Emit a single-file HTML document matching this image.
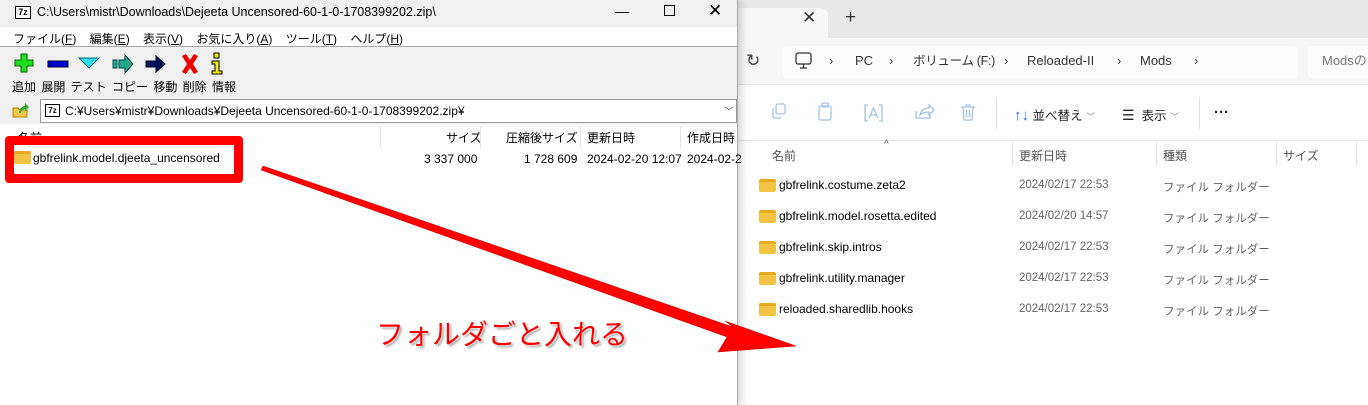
<!DOCTYPE html>
<html><head><meta charset="utf-8"><style>
*{margin:0;padding:0;box-sizing:border-box}
body{width:1368px;height:405px;overflow:hidden;background:#fff;font-family:"Liberation Sans","Noto Sans CJK JP",sans-serif;position:relative;font-size:12px;color:#000}
.a{position:absolute;white-space:nowrap}
.fold{position:absolute;width:17px;height:13px;background:#f3c444;border-radius:2px;border-top:3px solid #e9a920}
.bc{position:absolute;top:52px;height:18px;line-height:18px;font-size:13px;color:#333;white-space:nowrap}
</style></head><body>
<!-- Explorer (right) -->
<div class="a" style="left:738px;top:0;width:630px;height:38px;background:#e8e8e8"></div>
<div class="a" style="left:738px;top:8px;width:90px;height:30px;background:#f7f7f7;border-radius:0 8px 0 0"></div>
<div class="a" style="left:802px;top:8px;font-size:17px;color:#333">✕</div>
<div class="a" style="left:845px;top:7px;font-size:19px;color:#333">+</div>
<div class="a" style="left:738px;top:38px;width:630px;height:47px;background:#f7f7f7;border-bottom:1px solid #e5e5e5"></div>
<div class="a" style="left:746px;top:51px;font-size:17px;color:#444">↻</div>
<div class="a" style="left:783px;top:46px;width:515px;height:32px;background:#fdfdfd;border-radius:4px"></div>
<div class="a" style="left:1308px;top:46px;width:70px;height:32px;background:#fdfdfd;border-radius:4px"></div>
<svg class="a" style="left:794px;top:52px" width="20" height="18"><rect x="2" y="1" width="15" height="11" rx="2" fill="none" stroke="#333" stroke-width="1.3"/><path d="M6 16h7M9.5 12v4" stroke="#333" stroke-width="1.3"/></svg>
<div class="bc" style="left:829px">›</div>
<div class="bc" style="left:855px">PC</div>
<div class="bc" style="left:889px">›</div>
<div class="bc" style="left:913px;font-size:12.5px;letter-spacing:-0.3px">ボリューム (F:)</div>
<div class="bc" style="left:1004px">›</div>
<div class="bc" style="left:1027px">Reloaded-II</div>
<div class="bc" style="left:1117px">›</div>
<div class="bc" style="left:1140px">Mods</div>
<div class="bc" style="left:1194px">›</div>
<div class="bc" style="left:1322px;color:#777">Modsの</div>
<svg class="a" style="left:765px;top:100px" width="225" height="26" fill="none" stroke="#a7c4e0" stroke-width="1.3">
<rect x="11" y="4" width="9" height="10" rx="2"/><path d="M8 8v8a2 2 0 0 0 2 2h6"/>
<rect x="54" y="6" width="12" height="14" rx="2"/><rect x="57" y="3" width="6" height="4" rx="1"/>
<path d="M103 5h-3v16h3M114 5h3v16h-3M104 18l4.5-10 4.5 10M105.5 15h6"/>
<path d="M151 11v7h14v-3M155 15c1-5 4-7 9-7V5l5 5-5 5v-3c-4 0-7 1-9 3z"/>
<path d="M196 7h14M201 7V5h4v2M198 7l1 13h8l1-13M201.5 10v7M204.5 10v7"/>
</svg>
<div class="a" style="left:996px;top:97px;width:1px;height:32px;background:#e0e0e0"></div>
<div class="a" style="left:1014px;top:105px;font-size:12.5px;color:#222"><span style="color:#2a6ad8;font-size:15px">↑↓</span> 並べ替え <span style="color:#888;font-size:9px">﹀</span></div>
<div class="a" style="left:1122px;top:105px;font-size:12.5px;color:#222"><span style="font-size:14px">☰</span>&nbsp; 表示 <span style="color:#888;font-size:9px">﹀</span></div>
<div class="a" style="left:1199px;top:97px;width:1px;height:32px;background:#e0e0e0"></div>
<div class="a" style="left:1214px;top:104px;font-size:15px;color:#222;font-weight:bold">···</div>
<div class="a" style="left:738px;top:140px;width:630px;height:1px;background:#e5e5e5"></div>
<div class="a" style="left:884px;top:139px;font-size:10px;color:#666">^</div>
<div class="a" style="left:772px;top:147px;color:#555">名前</div>
<div class="a" style="left:1012px;top:142px;width:1px;height:23px;background:#e5e5e5"></div>
<div class="a" style="left:1019px;top:147px;color:#555">更新日時</div>
<div class="a" style="left:1156px;top:142px;width:1px;height:23px;background:#e5e5e5"></div>
<div class="a" style="left:1163px;top:147px;color:#555">種類</div>
<div class="a" style="left:1276px;top:142px;width:1px;height:23px;background:#e5e5e5"></div>
<div class="a" style="left:1283px;top:147px;color:#555">サイズ</div>
<div class="a" style="left:1356px;top:142px;width:1px;height:23px;background:#e5e5e5"></div>
<div class="fold" style="left:759px;top:179px"></div><div class="a" style="left:779px;top:178px">gbfrelink.costume.zeta2</div><div class="a" style="left:1019px;top:179px;color:#666;font-size:11.5px">2024/02/17 22:53</div><div class="a" style="left:1163px;top:179px;color:#666;font-size:11.5px">ファイル フォルダー</div>
<div class="fold" style="left:759px;top:210px"></div><div class="a" style="left:779px;top:209px">gbfrelink.model.rosetta.edited</div><div class="a" style="left:1019px;top:210px;color:#666;font-size:11.5px">2024/02/20 14:57</div><div class="a" style="left:1163px;top:210px;color:#666;font-size:11.5px">ファイル フォルダー</div>
<div class="fold" style="left:759px;top:241px"></div><div class="a" style="left:779px;top:240px">gbfrelink.skip.intros</div><div class="a" style="left:1019px;top:241px;color:#666;font-size:11.5px">2024/02/17 22:53</div><div class="a" style="left:1163px;top:241px;color:#666;font-size:11.5px">ファイル フォルダー</div>
<div class="fold" style="left:759px;top:272px"></div><div class="a" style="left:779px;top:271px">gbfrelink.utility.manager</div><div class="a" style="left:1019px;top:272px;color:#666;font-size:11.5px">2024/02/17 22:53</div><div class="a" style="left:1163px;top:272px;color:#666;font-size:11.5px">ファイル フォルダー</div>
<div class="fold" style="left:759px;top:303px"></div><div class="a" style="left:779px;top:302px">reloaded.sharedlib.hooks</div><div class="a" style="left:1019px;top:303px;color:#666;font-size:11.5px">2024/02/17 22:53</div><div class="a" style="left:1163px;top:303px;color:#666;font-size:11.5px">ファイル フォルダー</div>

<!-- 7-Zip window (left) -->
<div class="a" style="left:0;top:0;width:738px;height:405px;background:#fff;border-right:1px solid #aaa;box-shadow:3px 0 8px rgba(0,0,0,.18)"></div>
<div class="a" style="left:0;top:0;width:737px;height:27px;background:#f0f0f0"></div>
<div class="a" style="left:15px;top:6px;width:16px;height:13px;border:1px solid #000;font-size:9px;font-weight:bold;line-height:11px;text-align:center;background:#fff">7z</div>
<div class="a" style="left:37px;top:5px;font-size:12.5px">C:\Users\mistr\Downloads\Dejeeta Uncensored-60-1-0-1708399202.zip\</div>
<div class="a" style="left:615px;top:3px;font-size:14px">—</div>
<div class="a" style="left:664px;top:5px;width:11px;height:11px;border:1.3px solid #000"></div>
<div class="a" style="left:708px;top:1px;font-size:17px">✕</div>
<div class="a" style="left:13px;top:30px;font-size:12px;word-spacing:10px">ファイル(<u>F</u>) 編集(<u>E</u>) 表示(<u>V</u>) お気に入り(<u>A</u>) ツール(<u>T</u>) ヘルプ(<u>H</u>)</div>
<div class="a" style="left:0;top:46px;width:737px;height:52px;background:#f0f0f0;border-top:1px solid #aaa"></div>
<svg class="a" style="left:12px;top:52px" width="230" height="24">
<path d="M9 2h6v6h6v6h-6v6H9v-6H3V8h6z" fill="#2d2" stroke="#060" stroke-width="1"/>
<rect x="36" y="9" width="20" height="6" fill="#00c" stroke="#003"/>
<path d="M67 6h20l-10 10z" fill="#3de" stroke="#067"/>
<path d="M101 8h4v8h-4zM107 8h6v-5l8 9-8 9v-5h-6z" fill="#2a8" stroke="#044"/>
<path d="M134 9h10V4l9 8-9 8v-5h-10z" fill="#015" stroke="#003"/>
<path d="M170 4l4-2 4 6 4-6 4 2-5 8 5 8-4 2-4-6-4 6-4-2 5-8z" fill="#e00"/>
<path d="M202 1h5v5h-5zM200 9h7v10h3v3h-10v-3h3v-7h-3z" fill="#ee2" stroke="#000"/>
</svg>
<div class="a" style="left:12px;top:78px;font-size:12px;word-spacing:2px">追加 展開 テスト コピー 移動 削除 情報</div>
<div class="a" style="left:0;top:98px;width:737px;height:26px;background:#f0f0f0"></div>
<svg class="a" style="left:11px;top:101px" width="20" height="18"><path d="M2 16V7h5l2 2h7v7z" fill="#f2c94c" stroke="#a80"/><path d="M8 12c0-4 3-7 6-7V2l4 4-4 4V8c-2 0-4 2-4 4z" fill="#3a3"/></svg>
<div class="a" style="left:40px;top:99px;width:697px;height:24px;background:#fff;border:1px solid #999"></div>
<div class="a" style="left:45px;top:104px;width:15px;height:13px;border:1px solid #000;font-size:8px;font-weight:bold;line-height:11px;text-align:center">7z</div>
<div class="a" style="left:65px;top:104px;font-size:12px">C:¥Users¥mistr¥Downloads¥Dejeeta Uncensored-60-1-0-1708399202.zip¥</div>
<div class="a" style="left:724px;top:103px;font-size:10px;color:#555">﹀</div>
<div class="a" style="left:18px;top:129px;font-size:12px">名前</div>
<div class="a" style="left:380px;top:126px;width:1px;height:22px;background:#e5e5e5"></div>
<div class="a" style="left:446px;top:129px">サイズ</div>
<div class="a" style="left:480px;top:126px;width:1px;height:22px;background:#e5e5e5"></div>
<div class="a" style="left:506px;top:129px">圧縮後サイズ</div>
<div class="a" style="left:580px;top:126px;width:1px;height:22px;background:#e5e5e5"></div>
<div class="a" style="left:587px;top:129px">更新日時</div>
<div class="a" style="left:680px;top:126px;width:1px;height:22px;background:#e5e5e5"></div>
<div class="a" style="left:687px;top:129px">作成日時</div>
<div class="a" style="left:5px;top:136px;width:238px;height:47px;border:9px solid #f00;border-radius:4px;background:#fff"></div>
<div class="fold" style="left:14px;top:151px;width:17px;height:13px"></div>
<div class="a" style="left:33px;top:151px;font-size:12px">gbfrelink.model.djeeta_uncensored</div>
<div class="a" style="left:424px;top:152px">3 337 000</div>
<div class="a" style="left:524px;top:152px">1 728 609</div>
<div class="a" style="left:587px;top:152px">2024-02-20 12:07</div>
<div class="a" style="left:687px;top:152px">2024-02-2</div>

<!-- arrow -->
<svg class="a" style="left:0;top:0" width="1368" height="405">
<path d="M263 166 L733 327 L725 321 L796 346 L718 352 L727 337 L261 170 Z" fill="#f00" stroke="#c00" stroke-width=".5"/>
</svg>
<div class="a" style="left:376px;top:313px;font-size:28px;color:#f00;text-shadow:0 0 2px #fff,0 0 2px #fff,2px 2px 2px #999">フォルダごと入れる</div>
</body></html>
